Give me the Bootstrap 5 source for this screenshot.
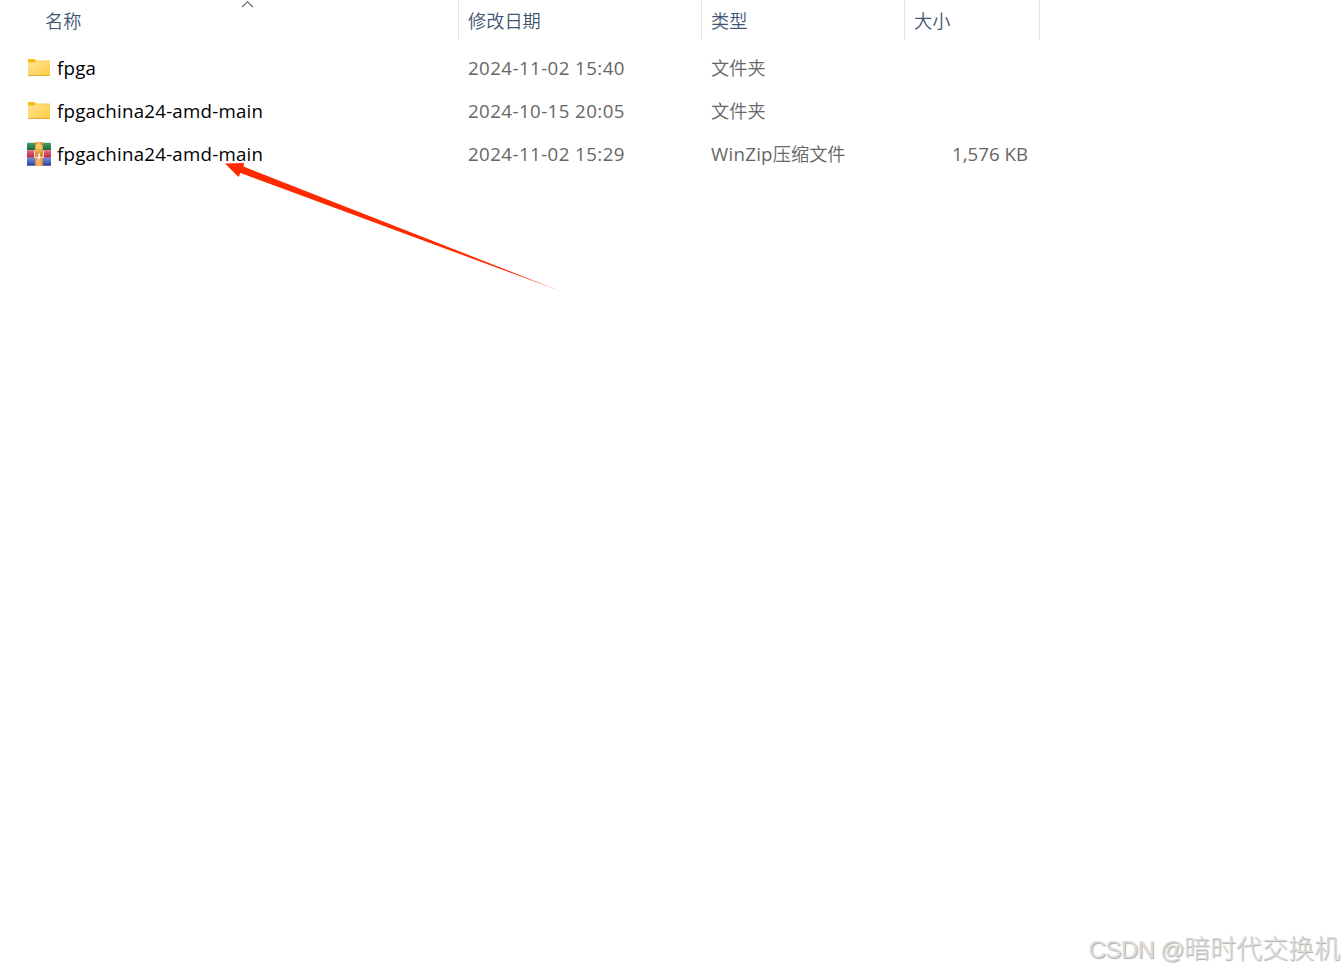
<!DOCTYPE html>
<html lang="zh-CN">

<head>
    <meta charset="UTF-8">
    <meta name="viewport" content="width=device-width, initial-scale=1.0">
    <title>文件列表</title>
    <!-- Bootstrap CSS -->
    <link href="https://cdn.jsdelivr.net/npm/bootstrap@5.3.2/dist/css/bootstrap.min.css" rel="stylesheet">
    <script src="https://cdn.jsdelivr.net/npm/bootstrap@5.3.2/dist/js/bootstrap.bundle.min.js"></script>
    <style>
        body {
            font-family: "Open Sans", "Noto Sans CJK SC", sans-serif;
            font-size: 18.7px;
            line-height: 26px;
        }

        .file-table {
            width: 1039px;
            table-layout: fixed;
        }

        .col-name { width: 458px; }
        .col-date { width: 243px; }
        .col-type { width: 203px; }
        .col-size { width: 135px; }

        .file-table th {
            height: 40px;
            padding: 0 10px;
            box-shadow: 1px 0 #e5e5e5;
            color: #3f5673;
        }

        .file-table th:first-child { padding-left: 45px; }

        .file-table td {
            height: 43px;
            padding: 0 10px 1px;
            color: #666;
        }

        .file-table td:first-child {
            padding-left: 27px;
            color: #000;
        }

        .file-table td:last-child { padding-right: 11px; }

        .file-table .row-gap td {
            height: 7px;
            padding: 0;
        }

        .han {
            font-family: "Noto Sans CJK SC", sans-serif;
            font-size: 18.2px;
            font-weight: 350;
        }

        .file-table .type-text { padding-bottom: 3px; }

        .file-name {
            margin-left: 6px;
            letter-spacing: 0.23px;
        }

        .date-text { letter-spacing: 0.43px; }

        .app-name { letter-spacing: 0.25px; }

        .sort-mark {
            top: 0;
            left: 241px;
        }

        .pointer-arrow {
            top: 155px;
            left: 220px;
        }

        .watermark {
            right: 4px;
            bottom: 2px;
            font-family: "Liberation Sans", "Noto Sans CJK SC", sans-serif;
            font-size: 26px;
            font-weight: 300;
            line-height: 38px;
            color: #dcdcdc;
            text-shadow: 1px 1px 1px #aaa;
        }

        .watermark-latin {
            font-size: 24px;
            letter-spacing: -0.6px;
        }
    </style>
</head>

<body class="bg-white vh-100 overflow-hidden position-relative">
    <!-- Iconos compartidos -->
    <svg class="position-absolute" width="0" height="0">
        <defs>
            <linearGradient id="folderFill" x1="0" y1="0" x2="1" y2="1">
                <stop offset="0" stop-color="#ffe69a" />
                <stop offset="1" stop-color="#ffca3c" />
            </linearGradient>
            <linearGradient id="bookGreen" x1="0" y1="0" x2="0" y2="1">
                <stop offset="0" stop-color="#48a56a" />
                <stop offset="1" stop-color="#17643a" />
            </linearGradient>
            <linearGradient id="bookRed" x1="0" y1="0" x2="0" y2="1">
                <stop offset="0" stop-color="#eb6a82" />
                <stop offset="1" stop-color="#ad2447" />
            </linearGradient>
            <linearGradient id="bookBlue" x1="0" y1="0" x2="0" y2="1">
                <stop offset="0" stop-color="#6a8fe6" />
                <stop offset="1" stop-color="#293f96" />
            </linearGradient>
            <linearGradient id="strap" x1="0" y1="0" x2="1" y2="0">
                <stop offset="0" stop-color="#ee9039" />
                <stop offset=".5" stop-color="#ffb768" />
                <stop offset="1" stop-color="#e4812f" />
            </linearGradient>
            <linearGradient id="strapTip" x1="0" y1="0" x2="0" y2="1">
                <stop offset="0" stop-color="#ffdc78" />
                <stop offset="1" stop-color="#c98420" />
            </linearGradient>
        </defs>
        <symbol id="icon-folder" viewBox="0 0 24 24">
            <path d="M1 4.2Q1 3 2.2 3H7.3L9 4.6V7H1Z" fill="#f9b916" />
            <path d="M1 6.5H7.2L9.2 4.8H22Q23 4.8 23 5.8V19Q23 20 22 20H2Q1 20 1 19Z" fill="url(#folderFill)" />
            <path d="M9 5H22.5" stroke="#f4c243" stroke-width=".7" />
            <path d="M1.3 19.5H22.7" stroke="#e5aa35" />
        </symbol>
        <symbol id="icon-archive" viewBox="0 0 24 24">
            <rect width="24" height="7.5" y=".7" rx=".5" fill="url(#bookGreen)" />
            <rect width="24" height="7.5" y="8.3" rx=".5" fill="url(#bookRed)" />
            <rect width="24" height="7.7" y="16" rx=".5" fill="url(#bookBlue)" />
            <rect x="8" width="8" height="24" fill="url(#strap)" />
            <path d="M7.5 8.5V15.5H16.5V8.5" fill="none" stroke="#f3e2d2" />
            <path d="M8.7 5.5Q8.7 2.6 12 2.6T15.3 5.5V14.5H8.7Z" fill="url(#strapTip)" />
            <path d="M12 11.5V17" stroke="#f5f1eb" stroke-width="1.8" />
        </symbol>
    </svg>

    <!-- Lista de archivos -->
    <table class="file-table">
        <colgroup>
            <col class="col-name">
            <col class="col-date">
            <col class="col-type">
            <col class="col-size">
        </colgroup>
        <thead>
            <tr>
                <th class="han">名称</th>
                <th class="han">修改日期</th>
                <th class="han">类型</th>
                <th class="han">大小</th>
            </tr>
        </thead>
        <tbody>
            <tr class="row-gap"><td colspan="4"></td></tr>
            <tr>
                <td>
                    <div class="d-flex align-items-center">
                        <svg width="24" height="24" class="flex-shrink-0"><use href="#icon-folder" /></svg>
                        <span class="file-name">fpga</span>
                    </div>
                </td>
                <td class="date-text">2024-11-02 15:40</td>
                <td class="type-text"><span class="han">文件夹</span></td>
                <td></td>
            </tr>
            <tr>
                <td>
                    <div class="d-flex align-items-center">
                        <svg width="24" height="24" class="flex-shrink-0"><use href="#icon-folder" /></svg>
                        <span class="file-name">fpgachina24-amd-main</span>
                    </div>
                </td>
                <td class="date-text">2024-10-15 20:05</td>
                <td class="type-text"><span class="han">文件夹</span></td>
                <td></td>
            </tr>
            <tr>
                <td>
                    <div class="d-flex align-items-center">
                        <svg width="24" height="24" class="flex-shrink-0"><use href="#icon-archive" /></svg>
                        <span class="file-name">fpgachina24-amd-main</span>
                    </div>
                </td>
                <td class="date-text">2024-11-02 15:29</td>
                <td class="type-text"><span class="app-name">WinZip</span><span class="han">压缩文件</span></td>
                <td class="text-end">1,576 KB</td>
            </tr>
        </tbody>
    </table>

    <!-- Orden ascendente -->
    <svg class="sort-mark position-absolute" width="13" height="9">
        <path d="M1.2 7L6.5 1.7L11.8 7" fill="none" stroke="#5c5c5c" stroke-width="1.1" />
    </svg>

    <!-- Flecha roja -->
    <svg class="pointer-arrow position-absolute" width="350" height="145">
        <defs>
            <linearGradient id="arrowFill" gradientUnits="userSpaceOnUse" x1="5" y1="9" x2="344" y2="137">
                <stop offset=".85" stop-color="#ff2a00" />
                <stop offset="1" stop-color="#ff2a00" stop-opacity=".5" />
            </linearGradient>
        </defs>
        <path d="M5 8.5L24 8L23.5 11.5L344 137.5L20.5 18L18.5 22Z" fill="url(#arrowFill)" />
    </svg>

    <div class="watermark position-absolute text-nowrap"><span class="watermark-latin">CSDN @</span>暗时代交换机</div>
</body>

</html>
